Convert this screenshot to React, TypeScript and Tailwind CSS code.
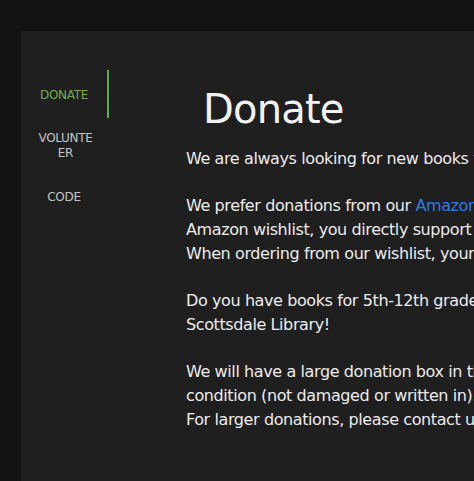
export default function App() {
  const nav = [
    { label: 'DONATE', active: true, h: 'h-[48px] pt-[2px]' },
    { label: 'VOLUNTEER', active: false, h: 'h-[55px] pt-[1px]' },
    { label: 'CODE', active: false, h: 'h-[46px] pt-[2px]' },
  ];

  return (
    <div className="w-[474px] h-[481px] overflow-hidden bg-[#121212] pt-[31px] pl-[21px] font-['DejaVu_Sans',sans-serif]">
      <div className="flex w-[900px] h-[600px] bg-[#1f1f1f]">
        {/* Sidebar */}
        <nav className="w-[88px] shrink-0 pt-[39px] flex flex-col">
          {nav.map((item) => (
            <a
              key={item.label}
              href="#"
              className={`${item.h} flex items-center justify-center text-center text-[12px] leading-[15px] tracking-[-0.3px] ${
                item.active ? 'text-[#6fae4e] border-r-2 border-[#5fb04a]' : 'text-[#c4c4c4] border-r-2 border-transparent'
              }`}
            >
              {item.label === 'VOLUNTEER' ? (
                <span className="pl-[3px]">
                  VOLUNTE
                  <br />
                  ER
                </span>
              ) : (
                item.label
              )}
            </a>
          ))}
        </nav>

        {/* Content */}
        <main className="ml-[77px] pt-[54px] text-[#ececec] text-[16px] leading-[23.7px] tracking-[-0.4px]">
          <h1 className="pl-[17px] text-[40px] leading-[48px] font-normal text-[#f2f2f2] mb-[14px] tracking-[-0.8px]">Donate</h1>
          <p className="whitespace-nowrap mb-[23.7px]">We are always looking for new books to add to our collection!</p>
          <p className="whitespace-nowrap mb-[23.7px]">
            We prefer donations from our <a href="#" className="text-[#2b7de9]">Amazon wishlist</a>. By ordering from our
            <br />
            Amazon wishlist, you directly support our mission of getting books to students.
            <br />
            When ordering from our wishlist, your order will be shipped directly to us.
          </p>
          <p className="whitespace-nowrap mb-[23.7px]">
            Do you have books for 5th-12th graders? Drop them off at the
            <br />
            Scottsdale Library!
          </p>
          <p className="whitespace-nowrap">
            We will have a large donation box in the lobby. Please make sure books are in good
            <br />
            condition (not damaged or written in).
            <br />
            For larger donations, please contact us directly.
          </p>
        </main>
      </div>
    </div>
  );
}
